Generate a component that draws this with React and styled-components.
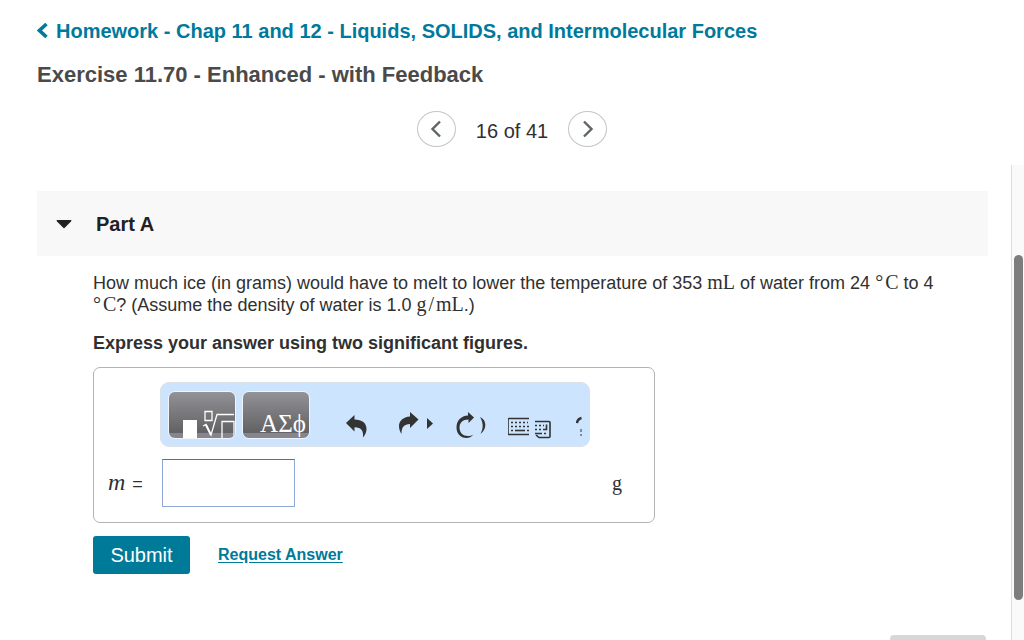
import React from "react";
import styled, { createGlobalStyle } from "styled-components";

const GlobalStyle = createGlobalStyle`
  * { box-sizing: border-box; }
  body {
    margin: 0;
    background: #fff;
    color: #303030;
    font-family: "Liberation Sans", Arial, sans-serif;
  }
  button, input { font: inherit; color: inherit; }
  button { cursor: pointer; }
  h1, p { margin: 0; }
  svg { display: block; flex: none; }
`;

const Page = styled.div`
  height: 100vh;
  display: flex;
  flex-direction: column;
  overflow: hidden;
`;

const Header = styled.header`
  padding: 18px 37px 18px;
`;

const BackLink = styled.a`
  display: flex;
  align-items: center;
  gap: 7px;
  color: #007a9c;
  font-size: 20px;
  line-height: 26px;
  font-weight: bold;
  text-decoration: none;
`;

const Title = styled.h1`
  margin-top: 18px;
  color: #4a4a4a;
  font-size: 22px;
  line-height: 26px;
`;

const Pager = styled.nav`
  display: flex;
  justify-content: center;
  align-items: center;
  gap: 20px;
  margin-top: 23px;
  font-size: 20px;
  line-height: 32px;
`;

const PagerLabel = styled.span`
  padding-top: 4px;
`;

const RoundButton = styled.button`
  display: flex;
  align-items: center;
  justify-content: center;
  width: 39px;
  height: 36px;
  padding: 0;
  border: 1px solid #c4c4c4;
  border-radius: 50%;
  background: #fff;
`;

const Body = styled.div`
  flex: 1;
  min-height: 0;
  display: flex;
`;

const Main = styled.main`
  flex: 1;
  min-width: 0;
  padding: 26px 23px 0 37px;
  overflow: hidden;
`;

const Track = styled.div`
  width: 13px;
  padding: 90px 1px 40px 2px;
  border-left: 1px solid #dcdcdc;
  background: #fafafa;
  display: flex;
`;

const Thumb = styled.div`
  flex: 1;
  border-radius: 5px;
  background: #7d7d7d;
`;

const PartHeader = styled.button`
  display: flex;
  align-items: center;
  gap: 24px;
  width: 100%;
  height: 65px;
  padding: 2px 19px 0;
  border: 0;
  background: #f8f8f8;
  color: #202124;
  font-size: 20px;
  font-weight: bold;
  text-align: left;
`;

const Question = styled.section`
  padding: 16px 24px 0 56px;
  font-size: 18px;
  line-height: 22px;
`;

const Instruction = styled.p`
  margin-top: 16px;
  font-weight: bold;
`;

const Unit = styled.span`
  font-family: "Liberation Serif", "Times New Roman", serif;
  font-size: 20px;
  line-height: 16px;
`;

const Degree = styled.span`
  margin-right: 2px;
`;

const Slash = styled.span`
  padding: 0 2px;
`;

const AnswerBox = styled.div`
  max-width: 562px;
  margin-top: 13px;
  padding: 14px 64px 15px 14px;
  border: 1px solid #b3b3b3;
  border-radius: 7px;
`;

const Toolbar = styled.div`
  display: flex;
  align-items: flex-start;
  height: 65px;
  margin-left: 52px;
  padding: 8px 7px;
  border: 1px solid #dbe1e8;
  border-radius: 9px;
  background: #cce4fe;
`;

const PaletteButton = styled.button`
  width: 68px;
  height: 48px;
  margin-right: 6px;
  padding: 17px 0 0 14px;
  border: 1px solid #f1f4f9;
  border-radius: 7px;
  background: linear-gradient(#929297, #626264 88%, #858590 89%);
  color: #fff;
  font-family: "Liberation Serif", "Times New Roman", serif;
  font-size: 25px;
  line-height: 29px;
  overflow: hidden;
`;

const Tools = styled.div`
  display: flex;
  gap: 22px;
  padding: 21px 0 0 30px;
`;

const ToolButton = styled.button`
  height: 28px;
  padding: 0;
  border: 0;
  background: none;
  color: #333;
`;

const AnswerRow = styled.div`
  display: flex;
  align-items: center;
  margin-top: 12px;
`;

const AnswerLabel = styled.label`
  width: 54px;
  white-space: nowrap;
`;

const Variable = styled.i`
  margin-right: 2px;
  font-family: "Liberation Serif", "Times New Roman", serif;
  font-size: 24px;
`;

const AnswerInput = styled.input`
  width: 133px;
  height: 48px;
  padding: 0 10px;
  border: 1px solid #8ea8d8;
  border-top-color: #4a70b5;
  border-radius: 0;
  outline: none;
`;

const AnswerUnit = styled(Unit)`
  margin-left: auto;
  margin-right: -32px;
`;

const Actions = styled.div`
  display: flex;
  align-items: center;
  gap: 28px;
  margin-top: 13px;
`;

const SubmitButton = styled.button`
  width: 97px;
  height: 38px;
  padding: 0;
  border: 0;
  border-radius: 3px;
  background: #007a99;
  color: #fff;
  font-size: 20px;
`;

const RequestLink = styled.a`
  color: #007a99;
  font-size: 16px;
  font-weight: bold;
  text-underline-offset: 2px;
`;

const NextPart = styled.button`
  display: block;
  width: 96px;
  height: 38px;
  margin: 61px 2px 0 auto;
  border: 0;
  border-radius: 4px;
  background: #d7d7d7;
`;

const Chevron = ({ right }) => (
  <svg width="12" height="18" viewBox="0 0 12 18" fill="none" stroke="#5d6664" strokeWidth="2.4">
    <path d={right ? "M2 1.5L9.5 9L2 16.5" : "M10 1.5L2.5 9L10 16.5"} />
  </svg>
);

const RootIcon = () => (
  <svg width="52" height="30" viewBox="0 0 52 30" fill="none" stroke="#fff" strokeWidth="1.3">
    <path d="M0 11H14V30H0Z" fill="#fff" stroke="none" />
    <path d="M22 2.5H29V11.5H22Z" />
    <path d="M20 17L23 15.5L28 26L34 5.5H51" />
    <path d="M23 16L28 26" strokeWidth="2" />
    <path d="M39 30V12.5H51V30" />
  </svg>
);

const UndoIcon = () => (
  <svg width="31" height="28" viewBox="0 -2 31 28" fill="currentColor">
    <path d="M0 9L8.5 1V5.5C16 5.5 20.5 9 20.5 15C20.5 18.5 18.8 21.3 17 23.5C17.7 16.5 15.5 13.5 8.5 13.2V17.5Z" />
  </svg>
);

const RedoIcon = () => (
  <svg width="35" height="28" viewBox="0 0 35 28" fill="currentColor">
    <path d="M19.5 7.5L11 0V4.5C4 5 0 9 0 14C0 17.2 1 19.7 2.5 22C2.5 15 5 12.2 11 12V16Z" />
    <path d="M28 6L34 11.5L28 17Z" />
  </svg>
);

const ResetIcon = () => (
  <svg width="30" height="28" viewBox="0 0 30 28" fill="currentColor">
    <path d="M12 0L18 5.5L12.5 11V7.5C6.5 7.5 3.5 11 3.5 15.5C3.5 20.5 7 24 12 24C14 24 15.5 23.5 17.5 22.5C15.5 25 13 26 10.5 26C4.5 26 .5 21.5 .5 15.5C.5 8.5 5 4 12 3.5Z" />
    <path d="M24 5C31 8 31 17 24.5 22C27.5 16 27.5 11 24 5Z" />
  </svg>
);

const KeyboardIcon = () => (
  <svg width="46" height="28" viewBox="1 0 46 28" fill="none" stroke="currentColor" strokeWidth="1.6">
    <path d="M22 6.5H2Q1 6.5 1 7.5V21.5Q1 22.5 2 22.5H22" />
    <path d="M4 10.5H21M4 14.5H22M4 18.5H6M20 18.5H22" strokeDasharray="2 2" />
    <path d="M8 18.5H18" />
    <path d="M28 9.5H42Q43 9.5 43 10.5V24.5Q43 25.5 42 25.5H32L29 23" />
    <path d="M28 13.5H37M28 17.5H36M37 21.5H40" strokeDasharray="2 2" />
    <path d="M28 21.5H35M39.5 12.5V17.5H36" />
  </svg>
);

const HelpIcon = () => (
  <svg width="6" height="28" viewBox="0 -2 6 28" fill="none" stroke="currentColor">
    <path d="M1 9Q1.5 5 5.5 4" strokeWidth="2.4" />
    <path d="M5 15V18M5 20V22" strokeWidth="1" />
  </svg>
);

const DegreesC = () => (
  <Unit><Degree>°</Degree>C</Unit>
);

export default function App() {
  return (
    <Page>
      <GlobalStyle />
      <Header>
        <BackLink href="#assignment">
          <svg width="12" height="18" viewBox="0 0 12 18" fill="none" stroke="currentColor" strokeWidth="3.6">
            <path d="M9.5 2L2.5 8.5L9.5 15" />
          </svg>
          Homework - Chap 11 and 12 - Liquids, SOLIDS, and Intermolecular Forces
        </BackLink>
        <Title>Exercise 11.70 - Enhanced - with Feedback</Title>
        <Pager aria-label="Exercises">
          <RoundButton aria-label="Previous exercise"><Chevron /></RoundButton>
          <PagerLabel>16 of 41</PagerLabel>
          <RoundButton aria-label="Next exercise"><Chevron right /></RoundButton>
        </Pager>
      </Header>
      <Body>
        <Main>
          <PartHeader aria-expanded="true">
            <svg width="16" height="10" viewBox="0 0 16 10" fill="currentColor">
              <path d="M1 0H15Q16 .5 15 1.5L8.5 8Q8 8.5 7.5 8L1 1.5Q0 .5 1 0Z" />
            </svg>
            Part A
          </PartHeader>
          <Question>
            <p>
              How much ice (in grams) would have to melt to lower the temperature of 353 <Unit>mL</Unit> of
              water from 24 <DegreesC /> to 4 <DegreesC />? (Assume the density of water is
              1.0 <Unit>g<Slash>/</Slash>mL</Unit>.)
            </p>
            <Instruction>Express your answer using two significant figures.</Instruction>
            <AnswerBox>
              <Toolbar role="toolbar" aria-label="Equation tools">
                <PaletteButton aria-label="Templates"><RootIcon /></PaletteButton>
                <PaletteButton aria-label="Symbols">ΑΣϕ</PaletteButton>
                <Tools>
                  <ToolButton aria-label="Undo"><UndoIcon /></ToolButton>
                  <ToolButton aria-label="Redo"><RedoIcon /></ToolButton>
                  <ToolButton aria-label="Reset"><ResetIcon /></ToolButton>
                  <ToolButton aria-label="Keyboard shortcuts"><KeyboardIcon /></ToolButton>
                  <ToolButton aria-label="Help"><HelpIcon /></ToolButton>
                </Tools>
              </Toolbar>
              <AnswerRow>
                <AnswerLabel htmlFor="answer"><Variable>m</Variable> =</AnswerLabel>
                <AnswerInput id="answer" type="text" />
                <AnswerUnit>g</AnswerUnit>
              </AnswerRow>
            </AnswerBox>
            <Actions>
              <SubmitButton>Submit</SubmitButton>
              <RequestLink href="#request-answer">Request Answer</RequestLink>
            </Actions>
          </Question>
          <NextPart aria-label="Next" />
        </Main>
        <Track><Thumb /></Track>
      </Body>
    </Page>
  );
}
